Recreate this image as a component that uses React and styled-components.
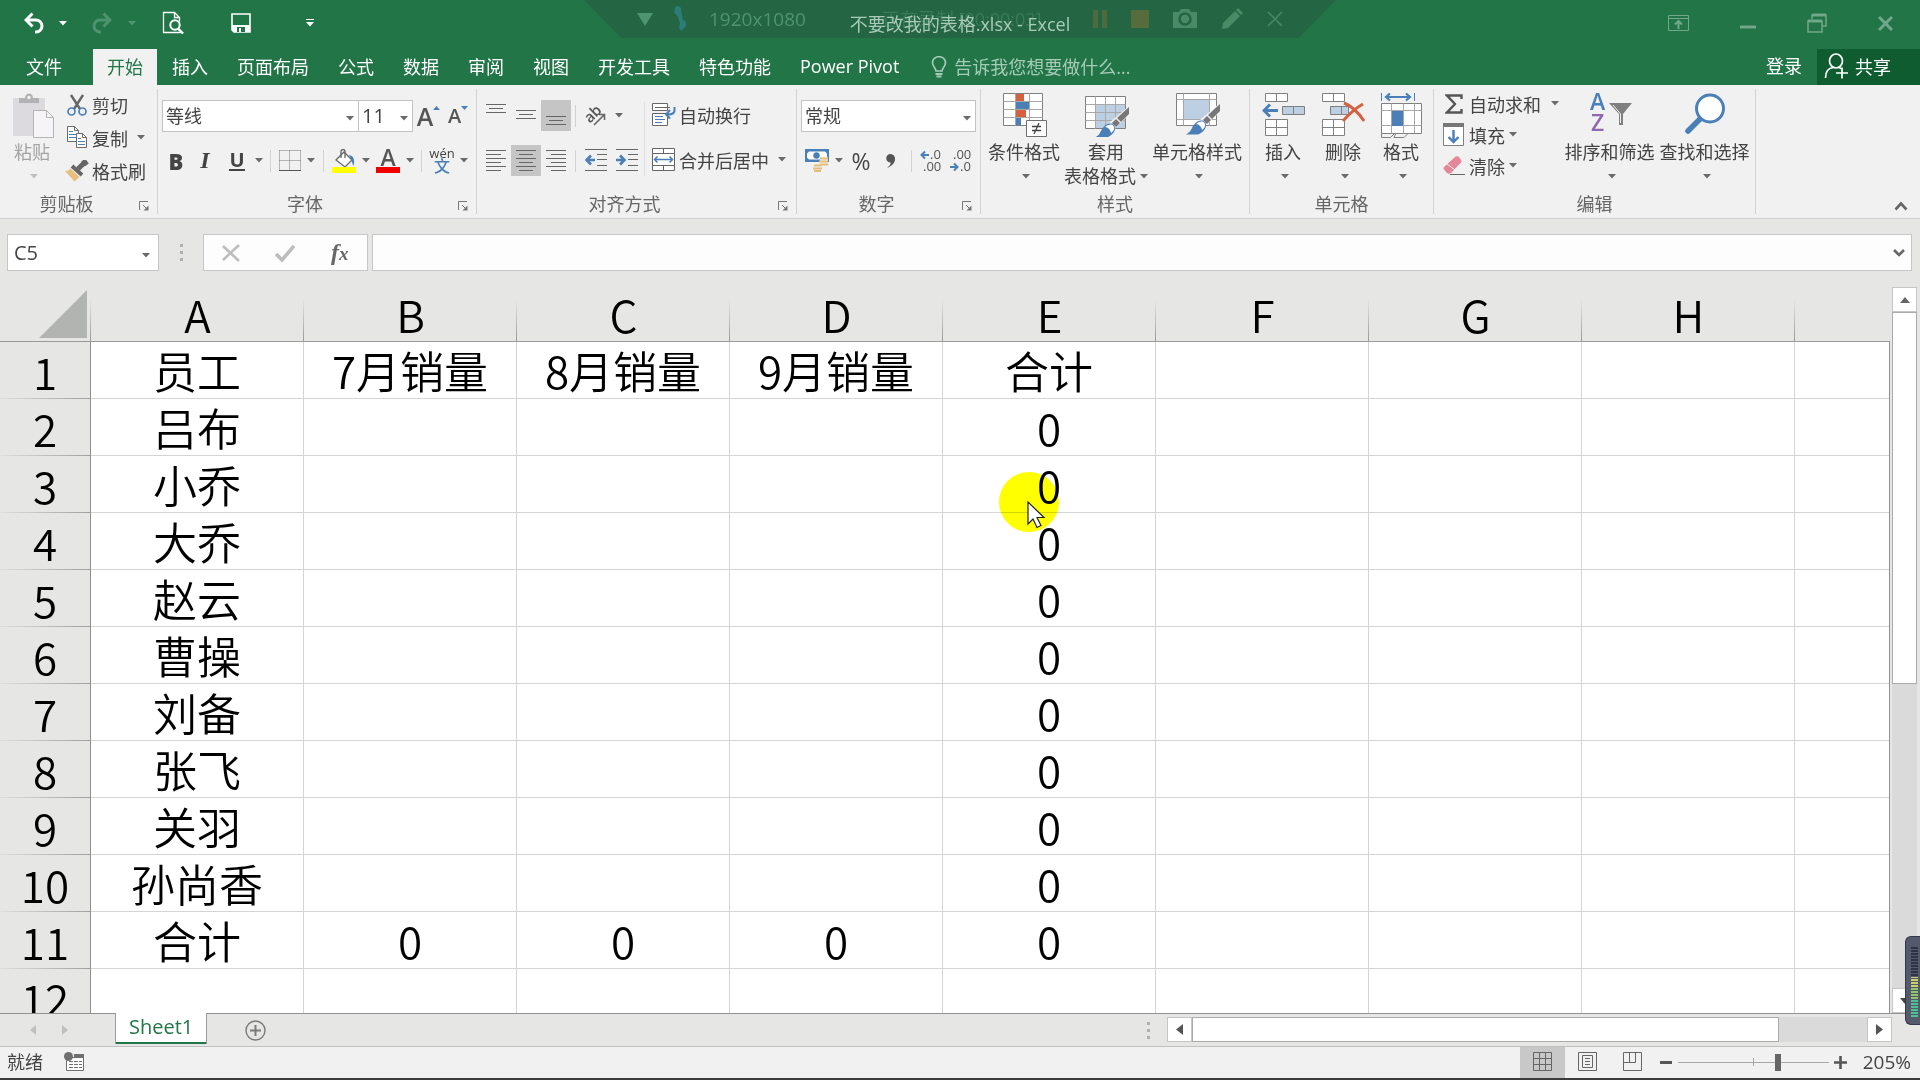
import React, {useState} from 'react';
import styled, {createGlobalStyle} from "styled-components";

const columns = ['A', 'B', 'C', 'D', 'E', 'F', 'G', 'H'];

const initialRows = [
    ['员工', '7月销量', '8月销量', '9月销量', '合计'],
    ['吕布', '', '', '', '0'],
    ['小乔', '', '', '', '0'],
    ['大乔', '', '', '', '0'],
    ['赵云', '', '', '', '0'],
    ['曹操', '', '', '', '0'],
    ['刘备', '', '', '', '0'],
    ['张飞', '', '', '', '0'],
    ['关羽', '', '', '', '0'],
    ['孙尚香', '', '', '', '0'],
    ['合计', '0', '0', '0', '0'],
    [],
];

const tabs = ['开始', '插入', '页面布局', '公式', '数据', '审阅', '视图', '开发工具', '特色功能', 'Power Pivot'];

const Icon = ({w, h, children, ...rest}) => (
    <svg width={w} height={h} viewBox={`0 0 ${w} ${h}`} fill="none" aria-hidden="true" {...rest}>
        {children}
    </svg>
);

const Arrow = ({color = '#6a6a6a'}) => (
    <Icon w={8} h={5}><path d="M0 0h8L4 4.5z" fill={color}/></Icon>
);

const UndoIcon = ({color = '#fff', flip}) => (
    <Icon w={22} h={22}>
        <g transform={flip ? 'translate(22 0) scale(-1 1)' : undefined} stroke={color}>
            <path d="M3 8h9a6 6 0 0 1 0 12h-1" strokeWidth="3"/>
            <path d="M8.500 1.500L2 8l6.500 6.500" strokeWidth="3"/>
        </g>
    </Icon>
);

const PreviewIcon = () => (
    <Icon w={22} h={24} stroke="#fff">
        <path d="M18.500 21.500H1.500V1.500h11l5 5v4M12.500 1.500v5h5" strokeWidth="1.300"/>
        <circle cx="13" cy="14" r="4.700" strokeWidth="2"/>
        <path d="M16 17.500l5 5" strokeWidth="2.400"/>
    </Icon>
);

const SaveIcon = () => (
    <Icon w={20} h={20}>
        <path d="M1 1h18v18H3l-2-2z" stroke="#fff" strokeWidth="1.600"/>
        <path d="M1 12h18v7H3l-2-2z" fill="#fff"/>
        <path d="M6 14h8v5H6z" fill="#217547"/>
        <path d="M8 15h2v4H8z" fill="#fff"/>
    </Icon>
);

const CustomizeIcon = () => (
    <Icon w={8} h={8}><path d="M0 .5h8" stroke="#fff"/><path d="M0 3h8L4 7.500z" fill="#fff"/></Icon>
);

const RibbonModeIcon = () => (
    <Icon w={21} h={16} stroke="#73a789">
        <path d="M.5.5h20v15H.5zM.5 3.500h20"/>
        <path d="M10.500 14V6M7 9.500L10.500 6 14 9.500" strokeWidth="2"/>
    </Icon>
);

const RestoreIcon = () => (
    <Icon w={20} h={20} stroke="#73a789">
        <path d="M5 6V2h14v11h-4" strokeWidth="1.500"/>
        <path d="M5 2h14" strokeWidth="3"/>
        <path d="M1 8h14v11H1z" strokeWidth="1.500"/>
        <path d="M1 8h14" strokeWidth="3"/>
    </Icon>
);

const BulbIcon = () => (
    <Icon w={16} h={22} stroke="#a6cbb5">
        <path d="M5 15c0-3-3.500-4.500-3.500-8.500a6.500 5.800 0 0 1 13 0C14.500 10.500 11 12 11 15z" strokeWidth="1.700"/>
        <path d="M4.500 18h7M5.500 20.500h5" strokeWidth="2"/>
    </Icon>
);

const ShareIcon = () => (
    <Icon w={24} h={26} stroke="#fff">
        <ellipse cx="12" cy="8" rx="6.500" ry="7" strokeWidth="1.700"/>
        <path d="M1.500 25c0-6 3-10 8-10.500M15 14.500l3 1.500M12 20h12M18 14.500v11" strokeWidth="1.700"/>
    </Icon>
);

const PasteIcon = () => (
    <Icon w={42} h={46}>
        <path d="M1 5h32v38H1z" fill="#dcdadf"/>
        <path d="M7 10V5h6c0-6 8-6 8 0h6v5z" fill="#b2b1b4"/>
        <circle cx="17" cy="4.500" r="1.800" fill="#f1f1f1"/>
        <path d="M21.500 17.500h13l7 7v20h-20z" fill="#f7f4f8" stroke="#b5b4b7"/>
        <path d="M34.500 17.500v7h7" stroke="#b5b4b7"/>
    </Icon>
);

const CutIcon = () => (
    <Icon w={20} h={22}>
        <path d="M4 1l9 14M16 1L7 15" stroke="#666" strokeWidth="2.400"/>
        <circle cx="4.500" cy="17.500" r="3.500" stroke="#4a7fb8" strokeWidth="1.700"/>
        <circle cx="15.500" cy="17.500" r="3.500" stroke="#4a7fb8" strokeWidth="1.700"/>
    </Icon>
);

const CopyIcon = () => (
    <Icon w={22} h={23}>
        <path d="M1.500.5h7l4 4v11h-11z" fill="#fff" stroke="#6a6a6a"/>
        <path d="M8.500.5v4h4" stroke="#6a6a6a"/>
        <path d="M3 5.500h4M3 8.500h7M3 11.500h7" stroke="#4a7fb8"/>
        <path d="M10.500 7.500h6l4 4v10h-10z" fill="#fff" stroke="#6a6a6a"/>
        <path d="M16.500 7.500v4h4" stroke="#6a6a6a"/>
        <path d="M12 12.500h3M12 15.500h7M12 18.500h7" stroke="#4a7fb8"/>
    </Icon>
);

const PainterIcon = () => (
    <Icon w={24} h={22}>
        <path d="M13 9l6-6" stroke="#666" strokeWidth="5"/>
        <path d="M18 4l4-3" stroke="#666" strokeWidth="6"/>
        <path d="M7 6l10 9" stroke="#666" strokeWidth="4"/>
        <path d="M5.500 8.500l9 8.500-5 4.500L0 11c3 0 4-1 5.500-2.500z" fill="#e8c07d"/>
    </Icon>
);

const BorderIcon = () => (
    <Icon w={22} h={22} stroke="#777">
        <path d="M.5.5h21M.5 10.500h21M.5 .5v20M10.500 .5v20M21.500 .5v20" strokeDasharray="1 1"/>
        <path d="M0 20.500h22" stroke="#555"/>
    </Icon>
);

const FillIcon = () => (
    <Icon w={24} h={24}>
        <path d="M4 11L12 3l8 8-7 7z" fill="#fff" stroke="#666" strokeWidth="1.300"/>
        <path d="M9 9V2.500a2 2 0 0 1 4 0V9" stroke="#666" strokeWidth="1.300"/>
        <path d="M17 6c5 1 6 5 4.500 11-1.500-3-1.500-5-2-6z" fill="#4a7fb8"/>
        <path d="M0 18h24v6H0z" fill="#ff0"/>
    </Icon>
);

const Lines = ({rows}) => (
    <Icon w={20} h={23} stroke="#666">
        {rows.map(([x1, x2, y]) => <path key={y} d={`M${x1} ${y + 0.5}H${x2}`}/>)}
    </Icon>
);

const OrientationIcon = () => (
    <Icon w={22} h={22}>
        <text x="0" y="15" fontSize="15" fill="#555" fontWeight="600" transform="rotate(-45 7 11)">ab</text>
        <path d="M9 20L19 10M14 9.500h5.500v5.500" stroke="#666" strokeWidth="1.600"/>
    </Icon>
);

const IndentIcon = ({right}) => (
    <Icon w={22} h={23}>
        <path d="M0 .5h22M12 5.500h10M12 10.500h10M12 16.500h10M0 21.500h22" stroke="#666"/>
        {right
            ? <path d="M0 11h7M4 6.500L8.500 11 4 15.500" stroke="#4a7fb8" strokeWidth="2.600"/>
            : <path d="M2 11h8M6 6.500L1.500 11 6 15.500" stroke="#4a7fb8" strokeWidth="2.600"/>}
    </Icon>
);

const WrapIcon = () => (
    <Icon w={24} h={23}>
        <path d="M.5.5h15v7H.5zM.5 10.500h15v12H.5z" fill="#fff" stroke="#666"/>
        <path d="M3 4.500h15" stroke="#666"/>
        <path d="M3 13.500h8M3 16.500h10M3 19.500h7" stroke="#4a7fb8"/>
        <path d="M22.500 4v3c0 4-3 4.500-8 4.500M18 7l-4 4.500 4 4" stroke="#4a7fb8" strokeWidth="2"/>
    </Icon>
);

const MergeIcon = () => (
    <Icon w={24} h={24}>
        <path d="M.5.5h22v22H.5z" fill="#fff" stroke="#666"/>
        <path d="M.5 5.500h22M.5 17.500h22M11.500 .5v5M11.500 17.500v5" stroke="#666"/>
        <path d="M2 11.500h19M5.500 8.500l-3 3 3 3M17.500 8.500l3 3-3 3" stroke="#4a7fb8" strokeWidth="1.500"/>
    </Icon>
);

const MoneyIcon = () => (
    <Icon w={24} h={23}>
        <path d="M0 0h24v13H0z" fill="#4a7fb8"/>
        <path d="M4 2.500h16l2 2v4l-2 2H4l-2-2v-4z" fill="#fff"/>
        <circle cx="11.500" cy="6.500" r="3.200" fill="#4a7fb8"/>
        <path d="M15 8h8v10h-8zM8 14h8v8H8z" fill="#f1f1f1"/>
        <path d="M15 9.500h8M14 12.500h9M15 15.500h8M9 16.500h7M8 19.500h9M9 22h7" stroke="#e5bd7b" strokeWidth="2"/>
    </Icon>
);

const DecimalIcon = ({less}) => (
    <Icon w={24} h={24}>
        <text x={less ? 3 : 10} y="10" fontSize="13" fill="#555">{less ? '.00' : '.0'}</text>
        <text x={less ? 10 : 3} y="22" fontSize="13" fill="#555">{less ? '.0' : '.00'}</text>
        {less
            ? <path d="M0 18h7M4 14.500L7.500 18 4 21.500" stroke="#4a7fb8" strokeWidth="2"/>
            : <path d="M2 6h7M5 2.500L1.500 6 5 9.500" stroke="#4a7fb8" strokeWidth="2"/>}
    </Icon>
);

const ConditionIcon = () => (
    <Icon w={44} h={44}>
        <path d="M.5.5h39v32H.5z" fill="#fff" stroke="#808080"/>
        <path d="M.5 8.500h39M.5 16.500h39M.5 24.500h39M12.500 .5v32M26.500 .5v32" stroke="#a8a8a8"/>
        <path d="M13 1h8v7h-8zM13 17h10v7H13z" fill="#d4603f"/>
        <path d="M13 9h13v7H13zM13 25h5v7h-5z" fill="#4a7fb8"/>
        <path d="M23.500 27.500h20v16h-20z" fill="#fff" stroke="#707070"/>
        <path d="M29 33.500h9M29 37.500h9M36 30l-5 11" stroke="#444" strokeWidth="1.300"/>
    </Icon>
);

const Brush = ({y}) => (
    <g transform={`translate(0 ${y})`}>
        <path d="M44 9v9L30 31l-6-5z" fill="#f1f1f1"/>
        <path d="M44 10v7l-8 8-4-4z" fill="#777"/>
        <path d="M31 22l4 4-4 4-4-4z" fill="#777"/>
        <path d="M29 28c3 5-1 10-7 12.500H10c6-3 5-7 9-11 3-3 7-4 10-1.500z" fill="#4a7fb8"/>
        <path d="M20 30c4-3 7-3 8.500-1 1.500 3 0 5-2.500 7-1-4-3-5.500-6-6z" fill="#fff"/>
    </g>
);

const FormatTableIcon = () => (
    <Icon w={44} h={44}>
        <path d="M.5 3.500h40v32H.5z" fill="#fff" stroke="#808080"/>
        <path d="M11 12h29v23H11z" fill="#bdd0e3"/>
        <path d="M.5 11.500h40M.5 19.500h40M.5 27.500h40M10.500 3.500v32M20.500 3.500v32M30.500 3.500v32" stroke="#a8a8a8"/>
        <Brush y={4}/>
    </Icon>
);

const CellStyleIcon = () => (
    <Icon w={44} h={44}>
        <path d="M.5.5h40v32H.5z" fill="#fff" stroke="#808080"/>
        <path d="M.5 6.500h40M.5 26.500h40M7.500 .5v32M33.500 .5v32" stroke="#a8a8a8"/>
        <path d="M8 7h25v19H8z" fill="#bdd0e3"/>
        <Brush y={1}/>
    </Icon>
);

const InsertIcon = () => (
    <Icon w={44} h={44}>
        <path d="M3.500.5h22v8h-22zM14.500 .5v8M3.500 26.500h22v16h-22zM14.500 26.500v16M3.500 34.500h22" fill="#fff" stroke="#808080"/>
        <path d="M20.500 13.500h22v8h-22zM31.500 13.500v8" fill="#bdd0e3" stroke="#808080"/>
        <path d="M2 17.500h14M8 11.500l-6 6 6 6" stroke="#4a7fb8" strokeWidth="3"/>
    </Icon>
);

const DeleteIcon = () => (
    <Icon w={44} h={44}>
        <path d="M.5.5h22v8H.5zM11.500 .5v8M.5 26.500h22v16H.5zM11.500 26.500v16M.5 34.500h22" fill="#fff" stroke="#808080"/>
        <path d="M8.500 13.500h18v8h-18zM19.500 13.500v8" fill="#bdd0e3" stroke="#808080"/>
        <path d="M22 10c8 3 14 9 20 18M41 11c-7 4-14 10-20 17" stroke="#d4603f" strokeWidth="3"/>
    </Icon>
);

const FormatIcon = () => (
    <Icon w={44} h={46}>
        <path d="M1.500 0v8M34.500 0v8" stroke="#4a7fb8"/>
        <path d="M6 4h24M10 .5L6 4l4 3.500M26 .5L30 4l-4 3.500" stroke="#4a7fb8" strokeWidth="2.200"/>
        <path d="M1.500 10.500h40v30h-40z" fill="#fff" stroke="#808080"/>
        <path d="M1.500 17.500h40M1.500 32.500h40M11.500 10.500v30M23.500 10.500v30M34.500 10.500v30" stroke="#a8a8a8"/>
        <path d="M12 18h11v15H12z" fill="#4a7fb8"/>
        <path d="M1.500 40.500v4h9l4-4M16 40l-2 4.500h10l4-4" stroke="#808080"/>
    </Icon>
);

const SumIcon = () => (
    <Icon w={18} h={20}><path d="M16.500 5V1.500H2l8 8.500-8 8.500h14.500V15" stroke="#555" strokeWidth="2.400"/></Icon>
);

const FillDownIcon = () => (
    <Icon w={22} h={24}>
        <path d="M.5.5h20v22H.5z" fill="#fff" stroke="#808080"/>
        <path d="M0 0h21v4H0z" fill="#777"/>
        <path d="M10.500 7v12M5.500 14l5 5 5-5" stroke="#4a7fb8" strokeWidth="2.400"/>
    </Icon>
);

const ClearIcon = () => (
    <Icon w={22} h={20}>
        <path d="M7 18.500h15" stroke="#666"/>
        <path d="M12 1q2-1.500 4 0l2 3q1 1.500 0 2.500L8 17q-2 1.500-4 0L1 13.500q-1-1.500 0-2.500z" fill="#e58798"/>
        <path d="M4 8l8 6" stroke="#f1f1f1"/>
    </Icon>
);

const SortIcon = () => (
    <Icon w={44} h={42}>
        <text x="1" y="17" fontSize="23" fill="#4a7fb8" fontWeight="600">A</text>
        <text x="2" y="38" fontSize="23" fill="#9068b0" fontWeight="600">Z</text>
        <path d="M20 10h23l-9 11v11h-4V21z" fill="#808080"/>
        <path d="M24 12l7.500 9v9" stroke="#f1f1f1"/>
    </Icon>
);

const FindIcon = () => (
    <Icon w={42} h={42}>
        <path d="M15 26L3 38" stroke="#4a7fb8" strokeWidth="5.500" strokeLinecap="round"/>
        <circle cx="25" cy="15.500" r="13.500" fill="#fff" stroke="#4a7fb8" strokeWidth="3"/>
    </Icon>
);

const LauncherIcon = () => (
    <Icon w={10} h={10}>
        <path d="M.5 9V.5H9" stroke="#777"/>
        <path d="M4 4l4 4" stroke="#777"/><path d="M9.500 4.500v5h-5z" fill="#777"/>
    </Icon>
);

const Chevron = ({up}) => (
    <Icon w={14} h={10}><path d={up ? 'M1.500 8.500L7 2.500l5.500 6' : 'M2 2l5 5 5-5'} stroke="#666" strokeWidth="2.600"/></Icon>
);

const Small = ({icon, label, arrow, $h}) => (
    <SmallButton type="button" $h={$h}>
        <SmallIcon>{icon}</SmallIcon>
        {label}
        {arrow && <ArrowSlot $gap={arrow}><Arrow/></ArrowSlot>}
    </SmallButton>
);

const Big = ({icon, label, second, width, disabled}) => (
    <BigButton type="button" $w={width} disabled={disabled}>
        <BigIcon>{icon}</BigIcon>
        <BigLabel>{label}</BigLabel>
        <BigBottom $wide={Boolean(second)}>{second}<Arrow color={disabled ? '#c0c0c0' : undefined}/></BigBottom>
    </BigButton>
);

const Group = ({label, width, launcher, children}) => (
    <GroupBox $w={width}>
        <GroupBody>{children}</GroupBody>
        <GroupFooter>
            <GroupLabel>{label}</GroupLabel>
            {launcher && <Launcher type="button" aria-label={`${label}设置`}><LauncherIcon/></Launcher>}
        </GroupFooter>
    </GroupBox>
);

const Drop = ({label, value, width, size}) => (
    <DropBox $w={width}>
        <DropSelect aria-label={label} defaultValue={value} $size={size}>
            <option>{value}</option>
        </DropSelect>
        <DropArrow><Arrow/></DropArrow>
    </DropBox>
);

const Recorder = () => (
    <RecorderBar>
        <Icon w={16} h={16}><path d="M0 2h16L8 15z" fill="#4f9470"/></Icon>
        <Icon w={16} h={28}><path d="M2 3c3-4 7-1 6 3l2 9c4 1 4 6 1 8l-3 3-2-3 1-5-3-8C1 9 1 6 2 3z" fill="#2c7d77"/></Icon>
        <RecorderText>1920x1080</RecorderText>
        <RecorderStatus>正在录制 [00:00:03]</RecorderStatus>
        <RecorderTools>
            <Icon w={14} h={18}><path d="M0 0h5v18H0zM9 0h5v18H9z" fill="#4f6a3c"/></Icon>
            <Icon w={18} h={18}><path d="M0 0h18v18H0z" fill="#566c3c"/></Icon>
            <Icon w={24} h={22}>
                <path d="M0 4h6l2-3h8l2 3h6v16H0z" fill="#4b8a67"/>
                <circle cx="12" cy="11" r="5.500" stroke="#246543" strokeWidth="2.600"/>
            </Icon>
            <Icon w={22} h={22}><path d="M1 21l1-6L14 3l5 5L7 20zM15 2l2-2 5 5-2 2z" fill="#4b8a67"/></Icon>
            <Icon w={16} h={16}><path d="M1 1l14 14M15 1L1 15" stroke="#4b8a67" strokeWidth="1.500"/></Icon>
        </RecorderTools>
    </RecorderBar>
);

const Ribbon = () => (
    <RibbonBar>
        <Group label="剪贴板" width={158} launcher>
            <Big icon={<PasteIcon/>} label="粘贴" width={60} disabled/>
            <Stack>
                <Small $h={33} icon={<CutIcon/>} label="剪切"/>
                <Small $h={33} icon={<CopyIcon/>} label="复制" arrow={9}/>
                <Small $h={33} icon={<PainterIcon/>} label="格式刷"/>
            </Stack>
        </Group>
        <Group label="字体" width={319} launcher>
            <Tools>
                <ToolRow>
                    <Drop label="字体" value="等线" width={197}/>
                    <Drop label="字号" value="11" width={55} size={20}/>
                    <Tool type="button" $w={31} aria-label="增大字号">
                        <FontSizeMark $size={25}>A</FontSizeMark>
                        <Icon w={7} h={20}><path d="M0 4h7L3.500 0z" fill="#4a7fb8"/></Icon>
                    </Tool>
                    <Tool type="button" $w={28} aria-label="减小字号">
                        <FontSizeMark $size={20}>A</FontSizeMark>
                        <Icon w={7} h={20}><path d="M0 0h7L3.500 4z" fill="#4a7fb8"/></Icon>
                    </Tool>
                </ToolRow>
                <ToolRow>
                    <Tool type="button" $w={28}><Bold>B</Bold></Tool>
                    <Tool type="button" $w={30}><Italic>I</Italic></Tool>
                    <Tool type="button" $w={34}><Underline>U</Underline></Tool>
                    <Tool type="button" $w={10} aria-label="下划线样式"><Arrow/></Tool>
                    <Divider $w={12}/>
                    <Tool type="button" $w={28} aria-label="边框"><BorderIcon/></Tool>
                    <Tool type="button" $w={14} aria-label="边框样式"><Arrow/></Tool>
                    <Divider $w={10}/>
                    <Tool type="button" $w={32} aria-label="填充颜色"><FillIcon/></Tool>
                    <Tool type="button" $w={12} aria-label="选择填充颜色"><Arrow/></Tool>
                    <Tool type="button" $w={32}><FontColor>A</FontColor></Tool>
                    <Tool type="button" $w={12} aria-label="选择字体颜色"><Arrow/></Tool>
                    <Divider $w={10}/>
                    <Tool type="button" $w={32}><Pinyin>wén<b>文</b></Pinyin></Tool>
                    <Tool type="button" $w={12} aria-label="拼音选项"><Arrow/></Tool>
                </ToolRow>
            </Tools>
        </Group>
        <Group label="对齐方式" width={320} launcher>
            <Tools>
                <ToolRow>
                    <Tool type="button" $w={30} aria-label="顶端对齐"><Lines rows={[[0, 20, 0], [3, 17, 4], [0, 20, 8]]}/></Tool>
                    <Tool type="button" $w={30} aria-label="垂直居中"><Lines rows={[[0, 20, 6], [3, 17, 10], [0, 20, 14]]}/></Tool>
                    <Tool type="button" $w={30} $on aria-label="底端对齐"><Lines rows={[[0, 20, 12], [3, 17, 16], [0, 20, 20]]}/></Tool>
                    <Divider $w={8}/>
                    <Tool type="button" $w={34} aria-label="方向"><OrientationIcon/></Tool>
                    <Tool type="button" $w={12} aria-label="方向选项"><Arrow/></Tool>
                </ToolRow>
                <ToolRow>
                    <Tool type="button" $w={30} aria-label="左对齐">
                        <Lines rows={[[0, 20, 1], [0, 15, 5], [0, 20, 9], [0, 15, 13], [0, 20, 17], [0, 15, 21]]}/>
                    </Tool>
                    <Tool type="button" $w={30} $on aria-label="居中">
                        <Lines rows={[[0, 20, 1], [3, 17, 5], [0, 20, 9], [3, 17, 13], [0, 20, 17], [3, 17, 21]]}/>
                    </Tool>
                    <Tool type="button" $w={30} aria-label="右对齐">
                        <Lines rows={[[0, 20, 1], [5, 20, 5], [0, 20, 9], [5, 20, 13], [0, 20, 17], [5, 20, 21]]}/>
                    </Tool>
                    <Divider $w={8}/>
                    <Tool type="button" $w={34} aria-label="减少缩进"><IndentIcon/></Tool>
                    <Tool type="button" $w={28} aria-label="增加缩进"><IndentIcon right/></Tool>
                </ToolRow>
            </Tools>
            <TallDivider/>
            <Tools>
                <Small $h={31} icon={<WrapIcon/>} label="自动换行"/>
                <Small $h={31} icon={<MergeIcon/>} label="合并后居中" arrow={9}/>
            </Tools>
        </Group>
        <Group label="数字" width={184} launcher>
            <Tools>
                <ToolRow>
                    <Drop label="数字格式" value="常规" width={175}/>
                </ToolRow>
                <ToolRow>
                    <Tool type="button" $w={32} aria-label="会计数字格式"><MoneyIcon/></Tool>
                    <Tool type="button" $w={12} aria-label="货币选项"><Arrow/></Tool>
                    <Tool type="button" $w={32}><Percent>%</Percent></Tool>
                    <Tool type="button" $w={28} aria-label="千位分隔样式">
                        <Icon w={10} h={14}><path d="M4.500 0A4.500 4.500 0 0 1 9 5c0 4-3 7-8 9 3-3 4-4 3.500-5.500A4.200 4.200 0 0 1 4.500 0z" fill="#555"/></Icon>
                    </Tool>
                    <Divider $w={12}/>
                    <Tool type="button" $w={30} aria-label="增加小数位数"><DecimalIcon/></Tool>
                    <Tool type="button" $w={30} aria-label="减少小数位数"><DecimalIcon less/></Tool>
                </ToolRow>
            </Tools>
        </Group>
        <Group label="样式" width={269}>
            <Big icon={<ConditionIcon/>} label="条件格式" width={82}/>
            <Big icon={<FormatTableIcon/>} label="套用" second="表格格式" width={82}/>
            <Big icon={<CellStyleIcon/>} label="单元格样式" width={100}/>
        </Group>
        <Group label="单元格" width={184}>
            <Big icon={<InsertIcon/>} label="插入" width={62}/>
            <Big icon={<DeleteIcon/>} label="删除" width={58}/>
            <Big icon={<FormatIcon/>} label="格式" width={58}/>
        </Group>
        <Group label="编辑" width={322}>
            <Stack $w={126} $pad={3}>
                <Small $h={31} icon={<SumIcon/>} label="自动求和" arrow={10}/>
                <Small $h={31} icon={<FillDownIcon/>} label="填充" arrow={4}/>
                <Small $h={31} icon={<ClearIcon/>} label="清除" arrow={4}/>
            </Stack>
            <Big icon={<SortIcon/>} label="排序和筛选" width={95}/>
            <Big icon={<FindIcon/>} label="查找和选择" width={95}/>
        </Group>
        <Collapse type="button" aria-label="折叠功能区"><Chevron up/></Collapse>
    </RibbonBar>
);

const Sheet = () => (
    <SheetArea>
        <GridView>
            <Grid>
                <colgroup>
                    <HeadCol/>
                    {columns.map((c) => <DataCol key={c}/>)}
                    <col/>
                </colgroup>
                <thead>
                    <tr>
                        <Corner><Icon w={48} h={48}><path d="M48 0v48H0z" fill="#b2b4b2"/></Icon></Corner>
                        {columns.map((c) => <ColumnHead key={c} scope="col">{c}</ColumnHead>)}
                        <ColumnHead/>
                    </tr>
                </thead>
                <tbody>
                    {initialRows.map((row, i) => (
                        <tr key={i}>
                            <RowHead scope="row">{i + 1}</RowHead>
                            {columns.map((c, j) => <Cell key={c}>{row[j]}</Cell>)}
                            <Cell/>
                        </tr>
                    ))}
                </tbody>
            </Grid>
            <Spotlight/>
            <Pointer>
                <Icon w={20} h={28}>
                    <path d="M1 1v22l5-5 4 8.500 4-2-4-8h7z" fill="#fff" stroke="#222" strokeWidth="1.200"/>
                </Icon>
            </Pointer>
        </GridView>
        <VScroll>
            <ScrollButton type="button" aria-label="向上滚动"><Icon w={10} h={6}><path d="M0 6h10L5 0z" fill="#666"/></Icon></ScrollButton>
            <VTrack><VThumb/></VTrack>
            <ScrollButton type="button" aria-label="向下滚动"><Icon w={10} h={6}><path d="M0 0h10L5 6z" fill="#444"/></Icon></ScrollButton>
        </VScroll>
        <Meter>
            {Array.from({length: 24}, (_, i) => (
                <MeterBar key={i} $color={i < 10 ? '#2e3446' : i < 14 ? '#c9cf6c' : i < 18 ? '#8fc468' : '#4fbf96'}/>
            ))}
        </Meter>
    </SheetArea>
);

const App = () => {
    const [activeTab, setActiveTab] = useState('开始');
    const [zoom, setZoom] = useState(205);

    return (
        <Window>
            <GlobalStyle/>
            <TitleBar>
                <QuickButton type="button" $w={34} aria-label="撤消"><UndoIcon/></QuickButton>
                <QuickButton type="button" $w={22} aria-label="撤消列表"><Arrow color="#fff"/></QuickButton>
                <QuickButton type="button" $w={54} aria-label="恢复"><UndoIcon color="#4f9470" flip/></QuickButton>
                <QuickButton type="button" $w={8} aria-label="恢复列表"><Arrow color="#4f9470"/></QuickButton>
                <QuickButton type="button" $w={74} aria-label="打印预览"><PreviewIcon/></QuickButton>
                <QuickButton type="button" $w={62} aria-label="保存"><SaveIcon/></QuickButton>
                <QuickButton type="button" $w={76} aria-label="自定义快速访问工具栏"><CustomizeIcon/></QuickButton>
                <Recorder/>
                <Caption>不要改我的表格.xlsx - Excel</Caption>
                <WindowButtons>
                    <QuickButton type="button" $w={69} aria-label="功能区显示选项"><RibbonModeIcon/></QuickButton>
                    <QuickButton type="button" $w={69} aria-label="最小化"><Icon w={16} h={18}><path d="M0 13h16" stroke="#73a789" strokeWidth="3"/></Icon></QuickButton>
                    <QuickButton type="button" $w={69} aria-label="还原"><RestoreIcon/></QuickButton>
                    <QuickButton type="button" $w={69} aria-label="关闭"><Icon w={15} h={15}><path d="M1 1l13 13M14 1L1 14" stroke="#73a789" strokeWidth="3"/></Icon></QuickButton>
                </WindowButtons>
            </TitleBar>
            <TabBar>
                <FileTab type="button">文件</FileTab>
                {tabs.map((tab) => (
                    <Tab key={tab} type="button" $active={tab === activeTab} onClick={() => setActiveTab(tab)}>{tab}</Tab>
                ))}
                <TellMe>
                    <BulbIcon/>
                    <TellMeInput placeholder="告诉我您想要做什么..." aria-label="告诉我您想要做什么"/>
                </TellMe>
                <SignIn href="#">登录</SignIn>
                <Share type="button"><ShareIcon/>共享</Share>
            </TabBar>
            <Ribbon/>
            <FormulaBar>
                <NameBox>
                    <NameInput defaultValue="C5" aria-label="名称框"/>
                    <DropArrow $right={9}><Arrow/></DropArrow>
                </NameBox>
                <Grip $w={43}><Dots/></Grip>
                <FormulaButtons>
                    <FormulaButton type="button" aria-label="取消"><Icon w={18} h={18}><path d="M1 2l16 15M17 1L1 16" stroke="#bdbdbd" strokeWidth="2.600"/></Icon></FormulaButton>
                    <FormulaButton type="button" aria-label="输入"><Icon w={20} h={18}><path d="M1 10l6 6L19 2" stroke="#bdbdbd" strokeWidth="3.600"/></Icon></FormulaButton>
                    <FormulaButton type="button"><Fx>f<small>x</small></Fx></FormulaButton>
                </FormulaButtons>
                <FormulaBox>
                    <FormulaInput aria-label="编辑栏"/>
                    <Chevron/>
                </FormulaBox>
            </FormulaBar>
            <Sheet/>
            <SheetBar>
                <SheetNav type="button" aria-label="上一个工作表"><Icon w={6} h={10}><path d="M6 0v10L0 5z" fill="#c0c0c0"/></Icon></SheetNav>
                <SheetNav type="button" aria-label="下一个工作表"><Icon w={6} h={10}><path d="M0 0v10l6-5z" fill="#c0c0c0"/></Icon></SheetNav>
                <SheetTab type="button">Sheet1</SheetTab>
                <AddSheet type="button" aria-label="新工作表">
                    <Icon w={21} h={21} stroke="#7a7a7a"><circle cx="10.500" cy="10.500" r="9.500" strokeWidth="1.400"/><path d="M5 10.500h11M10.500 5v11" strokeWidth="2"/></Icon>
                </AddSheet>
                <Grip $w={37}><Dots/></Grip>
                <HScroll>
                    <ScrollButton type="button" aria-label="向左滚动"><Icon w={7} h={11}><path d="M7 0v11L0 5.500z" fill="#555"/></Icon></ScrollButton>
                    <HTrack><HThumb/></HTrack>
                    <ScrollButton type="button" aria-label="向右滚动"><Icon w={7} h={11}><path d="M0 0v11l7-5.500z" fill="#555"/></Icon></ScrollButton>
                </HScroll>
            </SheetBar>
            <StatusBar>
                <span>就绪</span>
                <MacroButton type="button" aria-label="录制宏">
                    <Icon w={21} h={20}>
                        <path d="M2.500 5.500h17v13h-17z" stroke="#707070" fill="#fff"/>
                        <path d="M10 2h10v4H10z" fill="#707070"/>
                        <path d="M5 9.500h13M5 12.500h13M5 15.500h13" stroke="#707070" strokeDasharray="4 1"/>
                        <circle cx="4.500" cy="4.500" r="4.500" fill="#707070"/>
                    </Icon>
                </MacroButton>
                <ViewButton type="button" $on aria-label="普通">
                    <Icon w={20} h={20} stroke="#666"><path d="M.5.5h18v18H.5zM.5 6.500h18M.5 12.500h18M6.500 .5v18M12.500 .5v18"/></Icon>
                </ViewButton>
                <ViewButton type="button" aria-label="页面布局视图">
                    <Icon w={20} h={20} stroke="#666"><path d="M.5.5h18v18H.5zM4.500 3.500h10v12h-10zM7 6.500h5M7 9.500h5M7 12.500h5"/></Icon>
                </ViewButton>
                <ViewButton type="button" aria-label="分页预览">
                    <Icon w={20} h={20} stroke="#666"><path d="M.5.5h18v18H.5zM.5 10.500h12V.5M6.500 .5v10"/></Icon>
                </ViewButton>
                <ZoomButton type="button" aria-label="缩小" onClick={() => setZoom(zoom - 10)}><Icon w={13} h={13}><path d="M0 6.500h12" stroke="#555" strokeWidth="3"/></Icon></ZoomButton>
                <ZoomRange type="range" min="10" max="300" value={zoom} aria-label="显示比例" onChange={(e) => setZoom(Number(e.target.value))}/>
                <ZoomButton type="button" aria-label="放大" onClick={() => setZoom(zoom + 10)}><Icon w={13} h={13}><path d="M0 6.500h13M6.500 0v13" stroke="#555" strokeWidth="2.600"/></Icon></ZoomButton>
                <ZoomValue>{zoom}%</ZoomValue>
            </StatusBar>
        </Window>
    );
};

const GlobalStyle = createGlobalStyle`
  * {
    box-sizing: border-box;
  }

  body {
    margin: 0;
    background: #3c3c3c;
  }

  body, button, input, select {
    font-family: "Open Sans", "Noto Sans CJK SC", sans-serif;
    font-size: 18px;
  }

  button {
    border: 0;
    padding: 0;
    background: none;
    color: inherit;
  }

  svg {
    display: block;
    flex: none;
  }
`;

const Window = styled.div`
  height: 100vh;
  display: flex;
  flex-direction: column;
  overflow: hidden;
  border-bottom: 2px solid #3c3c3c;
  background: #e6e6e4;
  color: #444;
`;

const TitleBar = styled.header`
  position: relative;
  flex: none;
  display: flex;
  align-items: center;
  height: 49px;
  padding: 0 0 3px 18px;
  background: #217547;
`;

const QuickButton = styled.button`
  flex: none;
  display: flex;
  align-items: center;
  justify-content: center;
  width: ${(p) => p.$w}px;
  height: 46px;
`;

const Caption = styled.div`
  position: absolute;
  left: 0;
  right: 0;
  top: 12px;
  line-height: 24px;
  text-align: center;
  color: #a9cbb7;
  pointer-events: none;
`;

const RecorderBar = styled.div`
  position: absolute;
  top: 0;
  left: 50%;
  display: flex;
  align-items: center;
  gap: 20px;
  width: 752px;
  height: 38px;
  padding: 0 53px;
  transform: translateX(-50%);
  background: #246543;
  clip-path: polygon(0 0, 100% 0, 95% 100%, 5% 100%);
  color: #4f9470;
`;

const RecorderText = styled.span`
  font-size: 19px;
  line-height: 36px;
`;

const RecorderStatus = styled.span`
  flex: 1;
  padding-left: 56px;
  line-height: 34px;
  white-space: nowrap;
  color: #3a7c5a;
`;

const RecorderTools = styled.div`
  display: flex;
  align-items: center;
  gap: 24px;
`;

const WindowButtons = styled.div`
  display: flex;
  margin-left: auto;
`;

const TabBar = styled.nav`
  flex: none;
  display: flex;
  gap: 1px;
  height: 36px;
  background: #217547;
  color: #fff;
`;

const Tab = styled.button`
  padding: 0 14px 2px;
  white-space: nowrap;
  background: ${(p) => (p.$active ? '#f1f1f1' : 'transparent')};
  color: ${(p) => (p.$active ? '#217547' : '#fff')};
`;

const FileTab = styled(Tab)`
  width: 92px;
  padding: 0 4px 2px 0;
`;

const TellMe = styled.label`
  display: flex;
  align-items: center;
  gap: 7px;
  flex: 1;
  padding: 0 0 1px 17px;
`;

const TellMeInput = styled.input`
  flex: 1;
  min-width: 0;
  border: 0;
  padding: 0;
  outline: 0;
  background: none;
  color: #fff;

  &::placeholder {
    color: #a6cbb5;
    opacity: 1;
  }
`;

const SignIn = styled.a`
  padding: 0 14px;
  line-height: 34px;
  color: #fff;
  text-decoration: none;
`;

const Share = styled.button`
  display: flex;
  align-items: center;
  gap: 7px;
  width: 103px;
  padding: 0 0 2px 7px;
  background: #0e5c2f;
`;

const RibbonBar = styled.section`
  flex: none;
  display: flex;
  height: 134px;
  padding: 4px 0;
  border-bottom: 1px solid #d0d0d0;
  background: #f1f1f1;
`;

const GroupBox = styled.div`
  flex: none;
  display: flex;
  flex-direction: column;
  width: ${(p) => p.$w}px;
  border-right: 1px solid #d2d2d2;
`;

const GroupBody = styled.div`
  flex: 1;
  display: flex;
  align-items: flex-start;
  padding-left: 4px;
`;

const GroupFooter = styled.div`
  display: flex;
  align-items: center;
  height: 20px;
`;

const GroupLabel = styled.div`
  flex: 1;
  line-height: 20px;
  text-align: center;
  color: #666;
`;

const Launcher = styled.button`
  display: flex;
  justify-content: center;
  width: 24px;
  padding: 4px 2px 0 0;
`;

const Stack = styled.div`
  display: flex;
  flex-direction: column;
  width: ${(p) => (p.$w ? p.$w + 'px' : 'auto')};
  padding-left: ${(p) => p.$pad || 0}px;
`;

const SmallButton = styled.button`
  display: flex;
  align-items: center;
  height: ${(p) => p.$h}px;
  padding-bottom: 2px;
  white-space: nowrap;
`;

const SmallIcon = styled.span`
  display: flex;
  justify-content: center;
  width: 24px;
  margin: 0 3px 0 1px;
`;

const ArrowSlot = styled.span`
  padding-left: ${(p) => p.$gap}px;
`;

const BigButton = styled.button`
  display: flex;
  flex-direction: column;
  align-items: center;
  width: ${(p) => p.$w}px;
  padding-top: 4px;
  line-height: 24px;
  white-space: nowrap;
  color: ${(p) => (p.disabled ? '#a3a3a3' : '#444')};
`;

const BigIcon = styled.span`
  height: 47px;
  padding-right: 2px;
`;

const BigLabel = styled.span`
  padding-right: 4px;
`;

const BigBottom = styled.span`
  display: flex;
  align-items: center;
  gap: 4px;
  height: 24px;
  padding-right: ${(p) => (p.$wide ? 4 : 0)}px;
`;

const Tools = styled.div`
  display: flex;
  flex-direction: column;
  gap: 14px;
  padding-top: 11px;
`;

const ToolRow = styled.div`
  display: flex;
  align-items: center;
  height: 31px;
`;

const Tool = styled.button`
  display: flex;
  align-items: center;
  justify-content: center;
  width: ${(p) => p.$w}px;
  height: 31px;
  background: ${(p) => (p.$on ? '#c5c5c5' : 'transparent')};
`;

const Divider = styled.span`
  width: ${(p) => p.$w}px;
  height: 22px;
  background: linear-gradient(#d2d2d2, #d2d2d2) center / 1px 100% no-repeat;
`;

const TallDivider = styled.span`
  width: 1px;
  height: 74px;
  margin: 13px 6px 0 3px;
  background: #dedede;
`;

const FontSizeMark = styled.span`
  font-size: ${(p) => p.$size}px;
  line-height: 30px;
  font-weight: 600;
  color: #555;
`;

const Bold = styled.span`
  font-size: 22px;
  font-weight: 800;
`;

const Italic = styled.span`
  font-family: "Liberation Serif", serif;
  font-size: 24px;
  font-weight: 700;
  font-style: italic;
`;

const Underline = styled.span`
  height: 20px;
  border-bottom: 2px solid #444;
  font-size: 20px;
  line-height: 17px;
  font-weight: 700;
`;

const FontColor = styled.span`
  width: 24px;
  height: 24px;
  border-bottom: 6px solid #f00000;
  font-size: 23px;
  line-height: 17px;
  font-weight: 600;
  color: #555;
`;

const Pinyin = styled.span`
  display: flex;
  flex-direction: column;
  align-items: center;
  font-size: 13px;
  line-height: 10px;

  b {
    font-size: 16px;
    line-height: 16px;
    font-weight: 500;
    color: #4a7fb8;
  }
`;

const Percent = styled.span`
  font-size: 23px;
  line-height: 30px;
`;

const DropBox = styled.span`
  position: relative;
  display: flex;
  width: ${(p) => p.$w}px;
  height: 32px;

  & + & {
    margin-left: -1px;
  }
`;

const DropSelect = styled.select`
  appearance: none;
  width: 100%;
  border: 1px solid #c3c3c3;
  border-radius: 0;
  padding: 0 3px;
  background: #fff;
  font-size: ${(p) => p.$size || 18}px;
  color: #444;
`;

const DropArrow = styled.span`
  position: absolute;
  right: ${(p) => p.$right || 5}px;
  top: 50%;
  pointer-events: none;
`;

const Collapse = styled.button`
  align-self: flex-end;
  margin: 0 12px 3px auto;
`;

const FormulaBar = styled.section`
  flex: none;
  display: flex;
  height: 66px;
  padding: 15px 8px 14px 7px;
`;

const NameBox = styled.span`
  position: relative;
  display: flex;
  width: 152px;
  margin-right: 1px;
`;

const NameInput = styled.input`
  width: 100%;
  border: 1px solid #c6c6c6;
  padding: 0 6px;
  background: #fff;
  font-size: 20px;
  color: #444;
`;

const Grip = styled.span`
  flex: none;
  display: flex;
  align-items: center;
  justify-content: center;
  width: ${(p) => p.$w}px;
`;

const Dots = styled.i`
  width: 3px;
  height: 17px;
  background: repeating-linear-gradient(#b0b0b0 0 3px, transparent 3px 7px);
`;

const FormulaButtons = styled.div`
  display: flex;
  width: 165px;
  border: 1px solid #c6c6c6;
  background: #fdfdfd;
`;

const FormulaButton = styled.button`
  flex: 1;
  display: flex;
  align-items: center;
  justify-content: center;
`;

const Fx = styled.span`
  font-family: "Liberation Serif", serif;
  font-size: 24px;
  line-height: 30px;
  font-style: italic;
  font-weight: 700;
  color: #666;

  small {
    font-size: 19px;
  }
`;

const FormulaBox = styled.div`
  flex: 1;
  display: flex;
  align-items: center;
  margin-left: 4px;
  padding-right: 5px;
  border: 1px solid #c6c6c6;
  background: #fdfdfd;
`;

const FormulaInput = styled.input`
  flex: 1;
  border: 0;
  outline: 0;
  background: none;
`;

const SheetArea = styled.main`
  position: relative;
  flex: 1;
  display: flex;
  min-height: 0;
`;

const GridView = styled.div`
  position: relative;
  flex: 1;
  min-width: 0;
  overflow: hidden;
  background: #e6e6e4;

  &::after {
    content: "";
    position: absolute;
    right: 0;
    top: 56px;
    bottom: 0;
    width: 1px;
    background: #8f9290;
  }
`;

const Grid = styled.table`
  width: 100%;
  table-layout: fixed;
  border-collapse: separate;
  border-spacing: 0;
  font-family: "Noto Sans CJK SC", sans-serif;
  font-size: 44px;
  font-weight: 350;
  line-height: 54px;
  color: #000;
`;

const HeadCol = styled.col`
  width: 91px;
`;

const DataCol = styled.col`
  width: 213px;
`;

const Corner = styled.td`
  height: 57px;
  padding: 0 4px 3px 0;
  border-bottom: 1px solid #9b9b9b;
  background: linear-gradient(#e6e6e4, #9b9b9b) right bottom / 1px 42px no-repeat;
  vertical-align: bottom;

  svg {
    margin-left: auto;
  }
`;

const ColumnHead = styled.th`
  height: 57px;
  padding: 2px 0 0;
  border-bottom: 1px solid #9b9b9b;
  background: linear-gradient(#e6e6e4, #9b9b9b) right bottom / 1px 42px no-repeat;
  font-weight: inherit;

  &:last-child {
    background: none;
  }
`;

const RowHead = styled.th`
  height: 57px;
  padding: 0;
  border-right: 1px solid #8f9290;
  background: linear-gradient(90deg, #dedede, #a0a0a0) bottom / 100% 1px no-repeat;
  font-weight: inherit;
`;

const Cell = styled.td`
  height: 57px;
  padding: 0;
  border-right: 1px solid #d4d4d4;
  border-bottom: 1px solid #d4d4d4;
  background: #fff;
  text-align: center;
  white-space: nowrap;
`;

const Spotlight = styled.div`
  position: absolute;
  left: 999px;
  top: 187px;
  width: 60px;
  height: 60px;
  border-radius: 50%;
  background: #ff0;
  mix-blend-mode: multiply;
`;

const Pointer = styled.div`
  position: absolute;
  left: 1027px;
  top: 216px;
`;

const VScroll = styled.div`
  display: flex;
  flex-direction: column;
  width: 30px;
  padding: 2px 3px 0 2px;
`;

const ScrollButton = styled.button`
  flex: none;
  display: flex;
  align-items: center;
  justify-content: center;
  width: 25px;
  height: 25px;
  border: 1px solid #c6c6c6;
  background: #fff;
`;

const VTrack = styled.div`
  flex: 1;
  background: #dadada;
`;

const VThumb = styled.div`
  height: 55%;
  border: 1px solid #ababab;
  background: #fff;
`;

const Meter = styled.div`
  position: absolute;
  right: 0;
  bottom: -12px;
  z-index: 1;
  display: flex;
  flex-direction: column;
  gap: 1px;
  width: 15px;
  height: 89px;
  padding: 10px 2px 7px 5px;
  border: 1px solid #33384a;
  border-right: 0;
  border-radius: 6px 0 0 6px;
  background: #545a6c;
`;

const MeterBar = styled.i`
  flex: 1;
  background: ${(p) => p.$color};
`;

const SheetBar = styled.section`
  flex: none;
  display: flex;
  height: 34px;
  padding: 0 28px 0 17px;
  border-top: 1px solid #8f9290;
  border-bottom: 1px solid #c0c0c0;
`;

const SheetNav = styled.button`
  display: flex;
  align-items: center;
  justify-content: center;
  width: 32px;
`;

const SheetTab = styled.button`
  height: 31px;
  margin: -1px 38px 0 34px;
  padding: 0 13px 3px;
  border: solid #9b9b9b;
  border-width: 0 1px;
  box-shadow: inset 0 -2px #217547;
  background: #fff;
  font-size: 20px;
  line-height: 24px;
  color: #217547;
`;

const AddSheet = styled.button`
  margin-right: auto;
`;

const HScroll = styled.div`
  flex: 0 1 725px;
  display: flex;
  padding-top: 3px;
`;

const HTrack = styled.div`
  flex: 1;
  height: 25px;
  background: #dadada;
`;

const HThumb = styled.div`
  width: 87%;
  height: 100%;
  border: 1px solid #ababab;
  background: #fff;
`;

const StatusBar = styled.footer`
  flex: none;
  display: flex;
  align-items: center;
  height: 31px;
  padding: 0 9px 1px 7px;
  background: #f1f1f1;
  line-height: 28px;
`;

const MacroButton = styled.button`
  margin: 0 auto 0 21px;
`;

const ViewButton = styled.button`
  display: flex;
  align-items: center;
  justify-content: center;
  width: 45px;
  height: 31px;
  background: ${(p) => (p.$on ? '#c8c8c8' : 'transparent')};
`;

const ZoomButton = styled.button`
  margin: 0 5px;
`;

const ZoomRange = styled.input`
  appearance: none;
  width: 151px;
  height: 18px;
  margin: 0;
  background:
    linear-gradient(#a8a8a8, #a8a8a8) center / 1px 8px no-repeat,
    linear-gradient(#a8a8a8, #a8a8a8) center / 100% 1px no-repeat;

  &::-webkit-slider-thumb {
    appearance: none;
    width: 6px;
    height: 17px;
    background: #666;
  }
`;

const ZoomValue = styled.span`
  width: 59px;
  font-size: 19px;
  text-align: right;
`;

export default App;
